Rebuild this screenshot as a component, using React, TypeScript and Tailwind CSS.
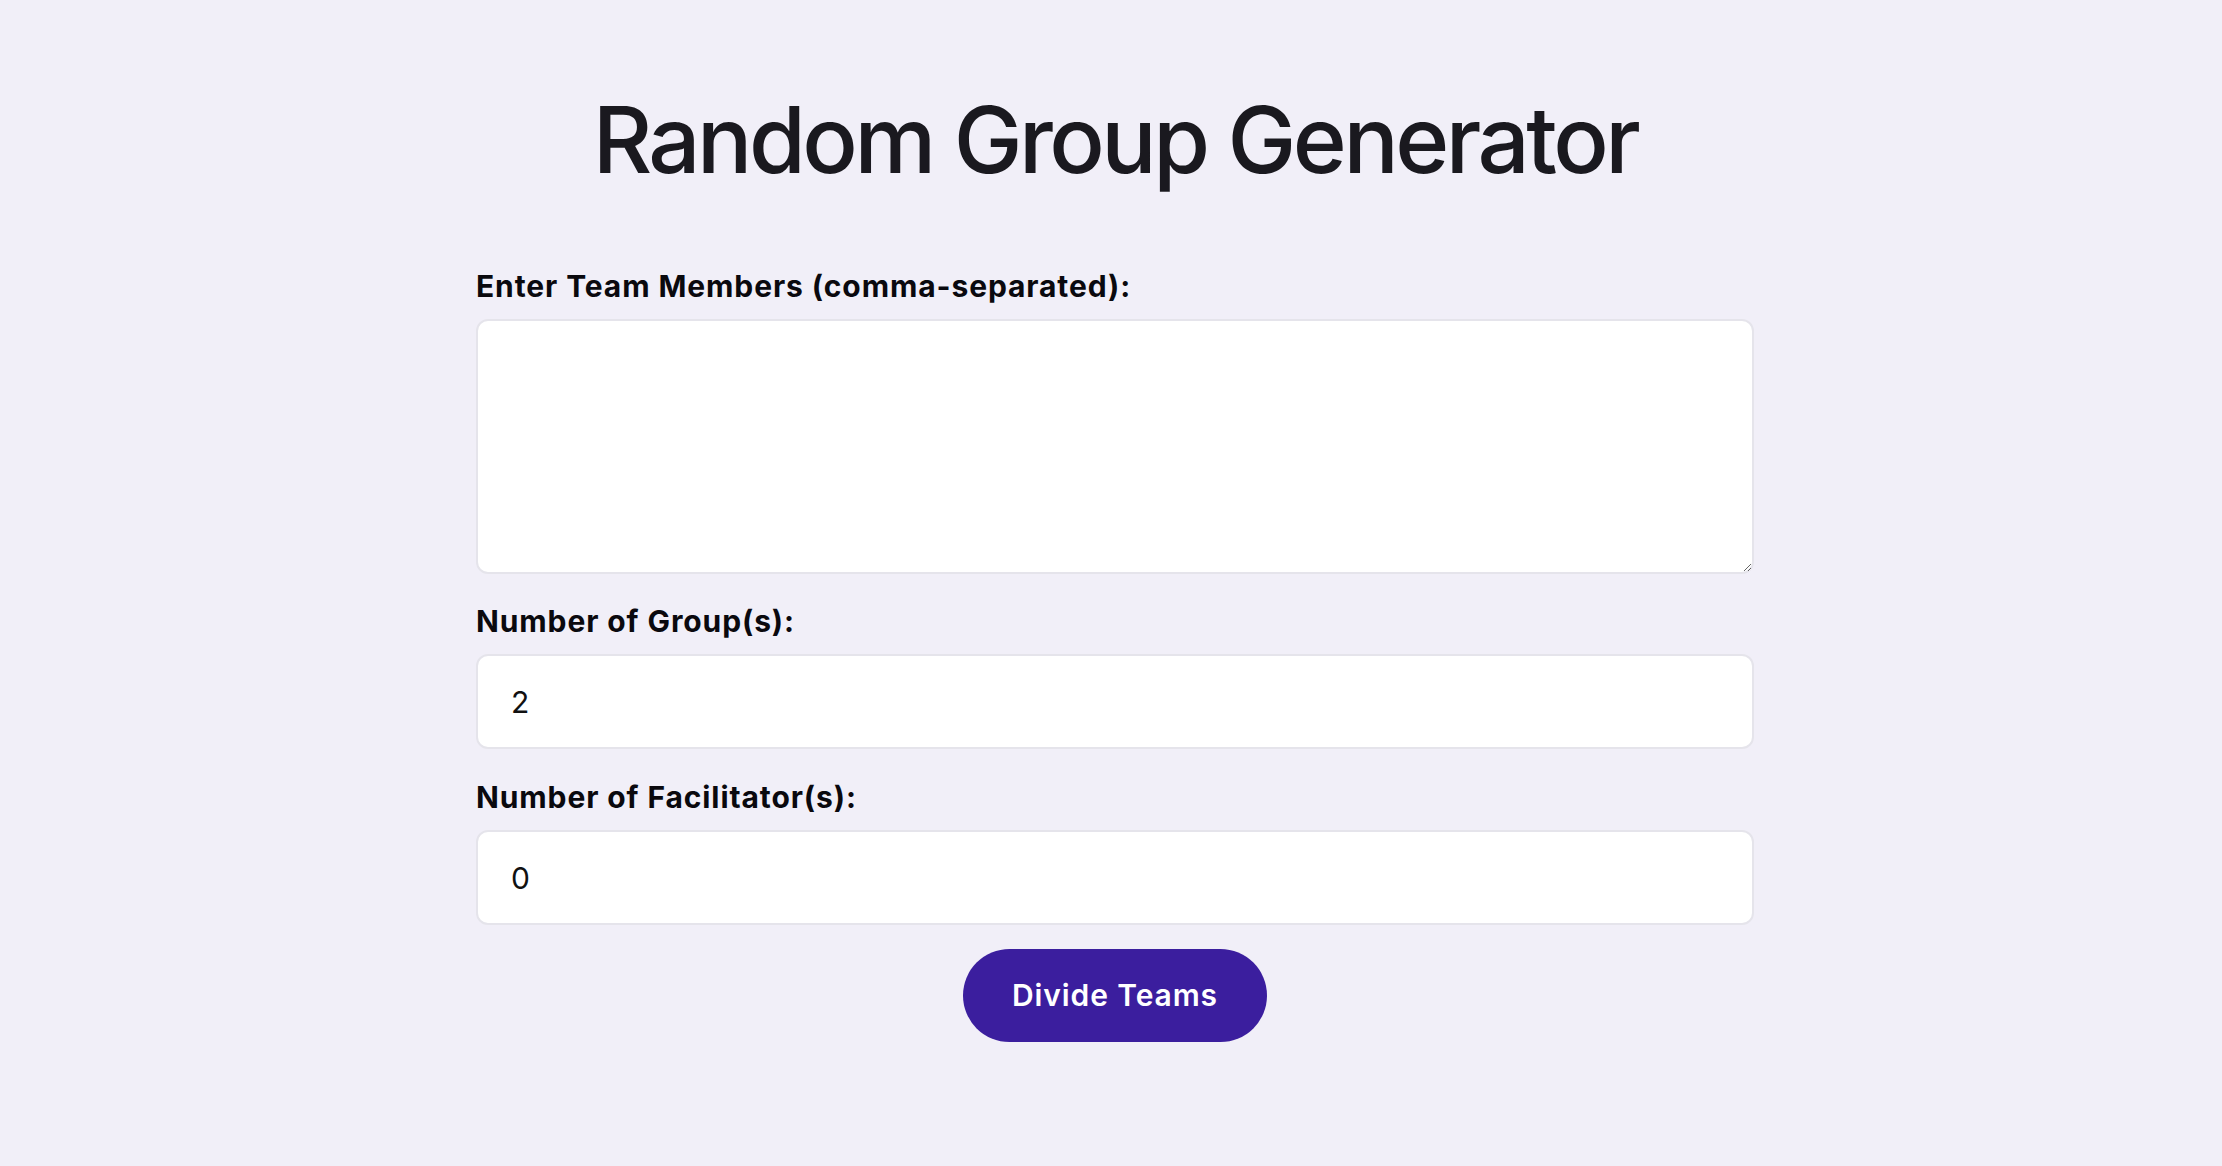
import React, { useState } from "react";

export default function App() {
  const [members, setMembers] = useState("");
  const [groups, setGroups] = useState("2");
  const [facilitators, setFacilitators] = useState("0");

  return (
    <div className="min-h-screen w-full bg-[#f1eff8] pl-[8px] font-['Inter','Noto_Sans',sans-serif]">
      <div className="flex flex-col items-center">
        <h1 className="mt-[94px] text-[92px] leading-none font-medium tracking-[-0.038em] text-[#1a191f]">
          Random Group Generator
        </h1>

        <div className="mt-[85px] flex w-[1278px] flex-col">
          <label className="text-[30px] leading-none font-bold tracking-[0.03em] text-[#0a090e]">
            Enter Team Members (comma-separated):
          </label>
          <textarea
            value={members}
            onChange={(e) => setMembers(e.target.value)}
            className="mt-[18px] h-[255px] w-full rounded-[12px] border-2 border-[#e5e4eb] bg-white px-[34px] py-[20px] text-[30px] text-[#111] outline-none"
          />

          <label className="mt-[32px] text-[30px] leading-none font-bold tracking-[0.03em] text-[#0a090e]">
            Number of Group(s):
          </label>
          <input
            type="text"
            value={groups}
            onChange={(e) => setGroups(e.target.value)}
            className="mt-[18px] h-[95px] w-full rounded-[12px] border-2 border-[#e5e4eb] bg-white px-[33px] text-[30px] text-[#111] outline-none"
          />

          <label className="mt-[33px] text-[30px] leading-none font-bold tracking-[0.03em] text-[#0a090e]">
            Number of Facilitator(s):
          </label>
          <input
            type="text"
            value={facilitators}
            onChange={(e) => setFacilitators(e.target.value)}
            className="mt-[18px] h-[95px] w-full rounded-[12px] border-2 border-[#e5e4eb] bg-white px-[33px] text-[30px] text-[#111] outline-none"
          />

          <button
            type="button"
            className="mx-auto mt-[24px] h-[93px] w-[304px] rounded-full bg-[#3b1e9e] text-[30px] font-semibold tracking-[0.03em] text-white"
          >
            Divide Teams
          </button>
        </div>
      </div>
    </div>
  );
}
